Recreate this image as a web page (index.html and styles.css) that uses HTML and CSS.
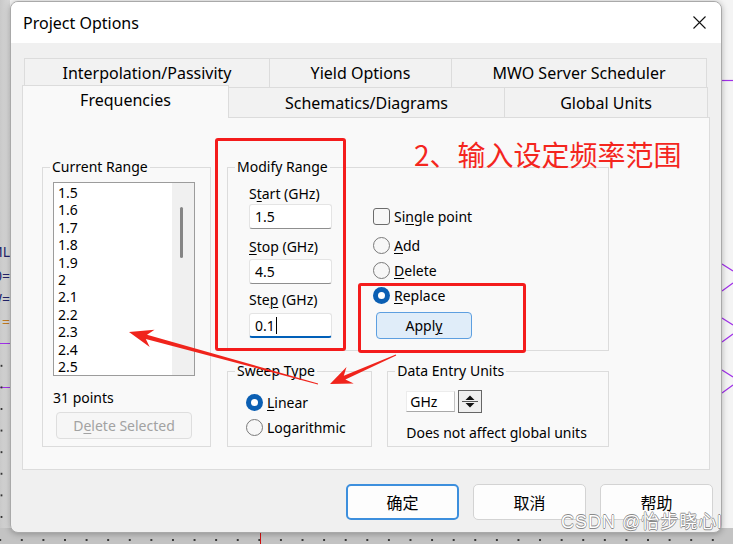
FILE: index.html
```html
<!DOCTYPE html>
<html lang="en">
<head>
<meta charset="utf-8">
<title>Project Options</title>
<link rel="stylesheet" href="styles.css">
</head>
<body>
<div class="desk">
  <div class="strip-left">
    <span class="frag fr1">ML</span>
    <span class="frag fr2">0=</span>
    <span class="frag fr3">W=</span>
    <span class="frag fr4">=</span>
    <div class="pline pl1"></div>
    <div class="pline pl2"></div>
    <div class="dots-left"></div>
  </div>
  <svg class="strip-right" width="11" height="544" viewBox="0 0 11 544">
    <path d="M0 80.5H11" stroke="#a030e8" stroke-width="1.2"/>
    <path d="M0 264L11 271M0 291L11 283" stroke="#a030e8" stroke-width="1.2" fill="none"/>
    <path d="M0 318L11 325M0 342L11 334" stroke="#a030e8" stroke-width="1.2" fill="none"/>
    <path d="M0 370L11 377M0 393L11 385" stroke="#a030e8" stroke-width="1.2" fill="none"/>
  </svg>
  <div class="strip-bottom"></div>
  <div class="redline"></div>

  <div class="dialog">
    <div class="titlebar">
      <span class="title">Project Options</span>
      <svg class="close" width="13" height="13" viewBox="0 0 13 13"><path d="M0.5 0.5L12.5 12.5M12.5 0.5L0.5 12.5" stroke="#111" stroke-width="1.1"/></svg>
    </div>
    <div class="dbody">
      <div class="tabrow back">
        <div class="tab w-interp first">Interpolation/Passivity</div>
        <div class="tab w-yield">Yield Options</div>
        <div class="tab w-mwo">MWO Server Scheduler</div>
      </div>
      <div class="tabrow front">
        <div class="tab w-freq first active">Frequencies</div>
        <div class="tab w-sch">Schematics/Diagrams</div>
        <div class="tab w-glob">Global Units</div>
      </div>
      <div class="panel">
        <div class="group current">
          <span class="glabel">Current Range</span>
          <div class="listbox">
            <div class="items">
              <div>1.5</div><div>1.6</div><div>1.7</div><div>1.8</div><div>1.9</div>
              <div>2</div><div>2.1</div><div>2.2</div><div>2.3</div><div>2.4</div><div>2.5</div>
            </div>
            <div class="vscroll"><div class="thumb"></div></div>
          </div>
          <div class="count">31 points</div>
          <div class="btn-del">D<u>e</u>lete Selected</div>
        </div>

        <div class="group modify">
          <span class="glabel">Modify Range</span>
          <div class="mod-cols">
            <div class="mod-left">
              <div class="flabel l1">S<u>t</u>art (GHz)</div>
              <div class="field">1.5</div>
              <div class="flabel l2"><u>S</u>top (GHz)</div>
              <div class="field f2">4.5</div>
              <div class="flabel l3">Ste<u>p</u> (GHz)</div>
              <div class="field f3 focus">0.1<span class="caret"></span></div>
            </div>
            <div class="mod-right">
              <div class="opt chkrow"><span class="checkbox"></span><span>Si<u>n</u>gle point</span></div>
              <div class="opt"><span class="radio"></span><span><u>A</u>dd</span></div>
              <div class="opt"><span class="radio"></span><span><u>D</u>elete</span></div>
              <div class="opt"><span class="radio on"></span><span><u>R</u>eplace</span></div>
              <div class="btn-apply">Appl<u>y</u></div>
            </div>
          </div>
        </div>

        <div class="lower">
          <div class="group sweep">
            <span class="glabel">Sweep Type</span>
            <div class="opt s1"><span class="radio on"></span><span><u>L</u>inear</span></div>
            <div class="opt s2"><span class="radio"></span><span>Logarithmic</span></div>
          </div>
          <div class="group units">
            <span class="glabel">Data Entry Units</span>
            <div class="unitrow">
              <div class="unitfield">GHz</div>
              <div class="spinner">
                <svg width="22" height="21" viewBox="0 0 22 21"><path d="M6.5 9H15.5L11 4.5Z" fill="#111"/><path d="M3 10.5H19" stroke="#555" stroke-width="1"/><path d="M6.5 12H15.5L11 16.5Z" fill="#111"/></svg>
              </div>
            </div>
            <div class="unitnote">Does not affect global units</div>
          </div>
        </div>
      </div>

      <div class="buttons">
        <div class="dbtn default">确定</div>
        <div class="dbtn">取消</div>
        <div class="dbtn">帮助</div>
      </div>
    </div>
  </div>

  <div class="anno box1"></div>
  <div class="anno box2"></div>
  <div class="anno note">2、输入设定频率范围</div>
  <svg class="arrows" width="733" height="544" viewBox="0 0 733 544">
    <polygon points="129,332 154.5,329.7 147,334.7 318.1,383.5 317.9,384.5 145.8,338.9 149.7,347.1" fill="#f0241c"/>
    <polygon points="330,384 346.5,367 343.8,375.8 395.8,354.6 396.2,355.4 345.4,379.4 353.7,383.4" fill="#f0241c"/>
  </svg>
  <div class="watermark">CSDN @怡步晓心l</div>
</div>
</body>
</html>
```

FILE: styles.css
```css
* { box-sizing: border-box; }
html, body { margin: 0; padding: 0; }
body {
  width: 733px;
  height: 544px;
  overflow: hidden;
  font-family: "Noto Sans", "Noto Sans CJK SC", sans-serif;
  font-size: 14px;
  color: #000;
}
u { text-decoration: underline; text-decoration-thickness: 1px; text-underline-offset: 2px; }

.desk {
  position: relative;
  width: 733px;
  height: 544px;
  padding: 1px 0 0 10px;
  background: #f4f4f4;
  overflow: hidden;
}

/* background canvas pieces */
.strip-left {
  position: absolute;
  left: 0; top: 0;
  width: 10px; height: 544px;
  background: linear-gradient(to right, #c9c9c9, #dadada);
}
.frag {
  position: absolute;
  right: 0;
  font-size: 14px;
  line-height: 16px;
  white-space: nowrap;
  color: #23236a;
}
.fr1 { top: 244px; }
.fr2 { top: 268px; }
.fr3 { top: 291px; }
.fr4 { top: 314px; color: #c07a22; }
.pline { position: absolute; left: 0; width: 10px; height: 1px; background: #a030e8; }
.pl1 { top: 343px; }
.pl2 { top: 387px; }
.dots-left {
  position: absolute;
  left: 0; top: 355px;
  width: 3px; height: 175px;
  background-image: radial-gradient(circle, #333 0.8px, transparent 1.3px);
  background-size: 3px 21.6px;
}
.strip-right { position: absolute; left: 722px; top: 0; }
.strip-bottom {
  position: absolute;
  left: 0; top: 528px;
  width: 733px; height: 16px;
  background-color: #c3c3c3;
  background-image: radial-gradient(circle, #3a3a3a 0.8px, transparent 1.3px);
  background-size: 21.6px 16px;
  background-position: 11px 4px;
}
.redline { position: absolute; left: 260px; top: 528px; width: 1px; height: 16px; background: #d01010; }

/* dialog */
.dialog {
  position: relative;
  z-index: 1;
  width: 712px;
  height: 532px;
  background: #f0f0f0;
  border: 1px solid #a9a9a9;
  border-radius: 8px;
  box-shadow: 0 1px 6px rgba(0,0,0,0.28);
  overflow: hidden;
}
.titlebar {
  height: 41px;
  background: #fff;
  display: flex;
  align-items: center;
  padding-left: 12px;
}
.title { font-size: 16px; line-height: 20px; }
.close { margin-left: auto; margin-right: 15px; }

.dbody { padding: 15px 11px 0 11px; }

.tabrow { display: flex; align-items: flex-start; }
.tabrow.back { height: 29px; margin-left: 2px; }
.tabrow.front { height: 30px; }
.tab {
  height: 100%;
  display: flex;
  align-items: center;
  justify-content: center;
  font-size: 16px;
  line-height: 20px;
  background: #f2f2f2;
  border-top: 1px solid #dcdcdc;
  border-right: 1px solid #dcdcdc;
  white-space: nowrap;
}
.tab.first { border-left: 1px solid #dcdcdc; }
.tab.active {
  position: relative;
  z-index: 2;
  height: 33px;
  margin-top: -2px;
  padding-bottom: 4px;
  background: #f9f9f9;
}
.w-interp { width: 246px; }
.w-yield { width: 182px; }
.w-mwo { width: 255px; }
.w-freq { width: 207px; }
.w-sch { width: 276px; }
.w-glob { width: 203px; }

.panel {
  height: 353px;
  border: 1px solid #dcdcdc;
  background: #f9f9f9;
  padding: 49px 0 0 19px;
  display: grid;
  grid-template-columns: 169px 382px;
  grid-template-rows: auto auto;
  align-content: start;
  column-gap: 16px;
  align-items: start;
}

.group { border: 1px solid #dcdcdc; }
.glabel {
  display: table;
  margin: -10px 0 0 7px;
  padding: 0 2px;
  background: #f9f9f9;
  line-height: 18px;
  white-space: nowrap;
}

/* current range */
.group.current { grid-row: 1 / 3; height: 280px; }
.listbox {
  margin: 6px 0 0 10px;
  width: 142px;
  height: 194px;
  border: 1px solid #9c9c9c;
  background: #fff;
  display: flex;
  overflow: hidden;
}
.items { flex: 1; padding: 1px 0 0 4px; line-height: 17.4px; font-size: 14px; }
.vscroll { width: 22px; background: #f0f0f0; padding: 24px 0 0 8px; }
.thumb { width: 3px; height: 51px; border-radius: 2px; background: #858585; }
.count { margin: 13px 0 0 10px; line-height: 18px; }
.btn-del {
  margin: 5px 0 0 13px;
  width: 136px;
  height: 27px;
  border: 1px solid #dedede;
  border-radius: 4px;
  background: #f6f6f6;
  color: #a2a2a2;
  display: flex;
  align-items: center;
  justify-content: center;
}

/* modify range */
.group.modify { height: 184px; }
.mod-cols { display: flex; }
.mod-left { width: 145px; padding-left: 21px; }
.flabel { line-height: 18px; }
.flabel.l1 { margin-top: 9px; }
.flabel.l2 { margin-top: 9px; }
.flabel.l3 { margin-top: 7px; }
.field {
  margin-top: 1px;
  width: 83px;
  height: 25px;
  background: #fff;
  border: 1px solid #e4e4e4;
  border-bottom-color: #8e8e8e;
  border-radius: 3px;
  padding-left: 5px;
  line-height: 23px;
  display: flex;
  align-items: center;
}
.field.f2 { margin-top: 3px; }
.field.f3 { margin-top: 4px; }
.field.focus { border-bottom: 2px solid #005fb8; }
.caret { display: inline-block; width: 1px; height: 17px; background: #000; margin-left: 1px; }

.mod-right { padding-top: 28px; }
.opt { display: flex; align-items: center; gap: 4px; height: 25px; white-space: nowrap; }
.opt.chkrow { margin-bottom: 4px; }
.checkbox {
  width: 17px; height: 17px;
  border: 1px solid #6c6c6c;
  border-radius: 3px;
  background: #f7f7f7;
  flex: none;
}
.radio {
  width: 17px; height: 17px;
  border: 1px solid #7a7a7a;
  border-radius: 50%;
  background: #f7f7f7;
  flex: none;
}
.radio.on {
  border: none;
  background: #0b5fb3;
  display: grid;
  place-items: center;
}
.radio.on::after {
  content: "";
  width: 7px; height: 7px;
  border-radius: 50%;
  background: #fff;
}
.btn-apply {
  margin: 4px 0 0 3px;
  width: 96px;
  height: 27px;
  border: 1px solid #5d9fe0;
  border-radius: 4px;
  background: #e0edf9;
  display: flex;
  align-items: center;
  justify-content: center;
}

/* lower row */
.lower { display: flex; margin-top: 20px; }
.group.sweep { width: 146px; height: 76px; }
.sweep .opt { margin-left: 18px; }
.opt.s1 { margin-top: 10px; }
.group.units { width: 223px; height: 76px; margin-left: 15px; }
.unitrow { display: flex; align-items: center; margin: 10px 0 0 18px; }
.unitfield {
  width: 49px; height: 21px;
  background: #fff;
  border: 1px solid #ececec;
  border-bottom-color: #a8a8a8;
  border-right-color: #c4c4c4;
  padding-left: 3px;
  line-height: 19px;
}
.spinner {
  margin-left: 3px;
  width: 24px; height: 23px;
  border: 1px solid #666;
  background: #efefef;
}
.spinner svg { display: block; }
.unitnote { margin: 11px 0 0 18px; line-height: 18px; white-space: nowrap; }

/* buttons */
.buttons {
  display: flex;
  justify-content: flex-end;
  gap: 14px;
  margin: 14px -3px 0 0;
}
.dbtn {
  width: 113px;
  height: 36px;
  border: 1px solid #d3d3d3;
  border-radius: 5px;
  background: #fdfdfd;
  font-family: "Noto Sans CJK SC", sans-serif;
  font-size: 16px;
  display: flex;
  align-items: center;
  justify-content: center;
}
.dbtn.default { border: 2px solid #3d8fdd; }

/* annotations */
.anno { position: absolute; z-index: 4; }
.box1 { left: 215px; top: 138px; width: 131px; height: 213px; border: 3px solid #f41c1c; border-radius: 3px; }
.box2 { left: 358px; top: 283px; width: 168px; height: 70px; border: 3px solid #f41c1c; border-radius: 3px; }
.note {
  left: 414px; top: 135px;
  font-family: "Noto Sans CJK SC", sans-serif;
  font-size: 28px;
  line-height: 38px;
  color: #f4261e;
  white-space: nowrap;
}
.arrows { position: absolute; left: 0; top: 0; z-index: 5; }
.watermark {
  position: absolute;
  z-index: 6;
  left: 561px; top: 511px;
  font-family: "Liberation Sans", "Noto Sans CJK SC", sans-serif;
  font-size: 18px;
  letter-spacing: 1px;
  line-height: 22px;
  color: #fff;
  white-space: nowrap;
  text-shadow: -0.6px 0 #8a8a8a, 0.6px 0 #8a8a8a, 0 0.6px #8a8a8a, 0 -0.6px #8a8a8a;
}
```
